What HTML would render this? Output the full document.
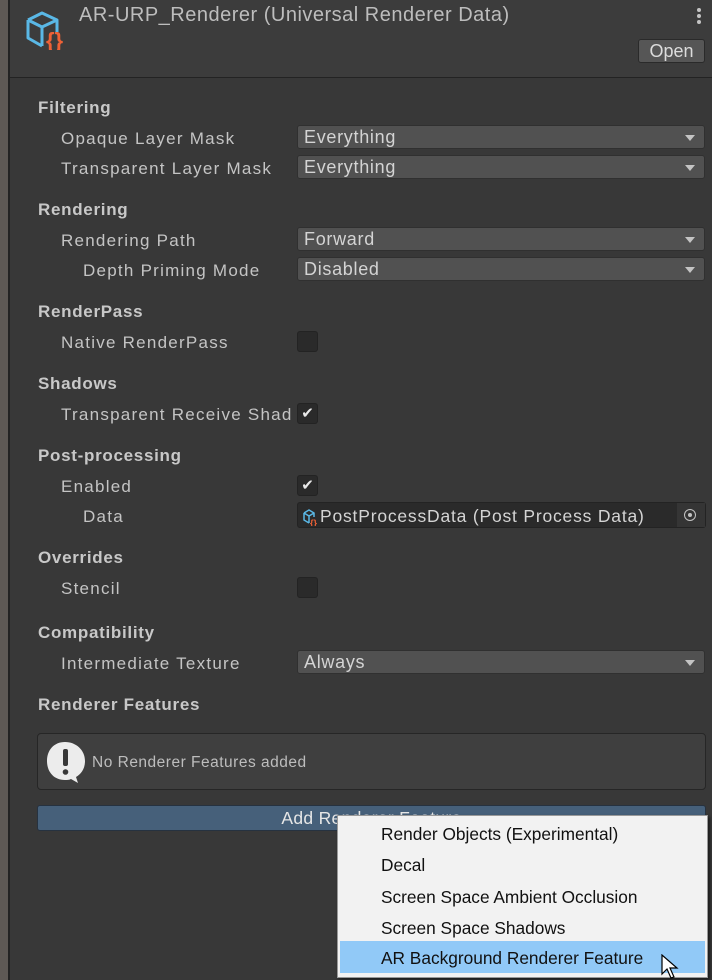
<!DOCTYPE html>
<html><head><style>
body{margin:0;width:712px;height:980px;background:#383838;position:relative;overflow:hidden;font-family:"Liberation Sans",sans-serif;color:#c4c4c4}
.a{position:absolute;white-space:nowrap}
.lb{font-size:17px;letter-spacing:1.25px}
.h{font-size:17px;font-weight:bold;letter-spacing:0.7px;color:#c8c8c8}
.dd{position:absolute;left:297px;width:408px;height:24px;background:#515151;border:1px solid #303030;border-radius:3px;box-sizing:border-box;font-size:18px;letter-spacing:0.7px;color:#d4d4d4;padding-left:6px;line-height:23px}
.dd:after{content:"";position:absolute;right:9px;top:9px;border-left:5px solid transparent;border-right:5px solid transparent;border-top:6px solid #c4c4c4}
.cb{position:absolute;left:297px;width:21px;height:21px;background:#2a2a2a;border:1px solid #232323;border-radius:3px;box-sizing:border-box;color:#e8e8e8;font-size:15px;text-align:center;line-height:20px}
.mi{position:absolute;left:381px;font-size:17.3px;color:#111;font-family:"Liberation Sans",sans-serif}
</style></head><body>
<div class="a" style="left:0;top:0;width:8px;height:980px;background:#5e5955"></div>
<div class="a" style="left:8px;top:0;width:2px;height:980px;background:#232323"></div>
<div class="a" style="left:10px;top:0;width:702px;height:77px;background:#3c3c3c;border-bottom:1px solid #232323"></div>
<svg class="a" style="left:24px;top:8px" width="48" height="42" viewBox="0 0 48 42">
<path d="M4 12 L18 5 L33 12 L33 24 M4 12 L4 30 L18 38 M4 12 L18 19 L33 12 M18 19 L18 38" fill="none" stroke="#5ab8e6" stroke-width="3" stroke-linejoin="round"/>
<text x="22" y="40" fill="#ef6136" font-size="22" font-weight="bold" font-family="Liberation Sans">{}</text>
</svg>
<div class="a" style="left:79px;top:4px;font-size:20px;letter-spacing:0.5px;color:#bdbdbd">AR-URP_Renderer (Universal Renderer Data)</div>
<div class="a" style="left:697px;top:8px;width:4px;height:4px;background:#c4c4c4;border-radius:2px;box-shadow:0 6px 0 #c4c4c4,0 12px 0 #c4c4c4"></div>
<div class="a" style="left:638px;top:39px;width:67px;height:24px;background:#565656;border:1px solid #2a2a2a;border-radius:3px;box-sizing:border-box;font-size:18px;text-align:center;line-height:22px;color:#dcdcdc">Open</div>

<div class="a h" style="left:38px;top:98px">Filtering</div>
<div class="a lb" style="left:61px;top:129px">Opaque Layer Mask</div>
<div class="dd" style="top:125px">Everything</div>
<div class="a lb" style="left:61px;top:159px">Transparent Layer Mask</div>
<div class="dd" style="top:155px">Everything</div>

<div class="a h" style="left:38px;top:200px">Rendering</div>
<div class="a lb" style="left:61px;top:231px">Rendering Path</div>
<div class="dd" style="top:227px">Forward</div>
<div class="a lb" style="left:83px;top:261px">Depth Priming Mode</div>
<div class="dd" style="top:257px">Disabled</div>

<div class="a h" style="left:38px;top:302px">RenderPass</div>
<div class="a lb" style="left:61px;top:333px">Native RenderPass</div>
<div class="cb" style="top:331px"></div>

<div class="a h" style="left:38px;top:374px">Shadows</div>
<div class="a lb" style="left:61px;top:405px">Transparent Receive Shad</div>
<div class="cb" style="top:403px">✔</div>

<div class="a h" style="left:38px;top:446px">Post-processing</div>
<div class="a lb" style="left:61px;top:477px">Enabled</div>
<div class="cb" style="top:475px">✔</div>
<div class="a lb" style="left:83px;top:507px">Data</div>
<div class="a" style="left:297px;top:502px;width:409px;height:26px;background:#2a2a2a;border:1px solid #232323;border-radius:3px;box-sizing:border-box"></div>
<div class="a" style="left:677px;top:503px;width:28px;height:24px;background:#353535"></div>
<div class="a" style="left:684px;top:509px;width:10px;height:10px;border:1.5px solid #c4c4c4;border-radius:50%"></div>
<div class="a" style="left:688px;top:513px;width:4px;height:4px;background:#c4c4c4;border-radius:50%"></div>
<svg class="a" style="left:302px;top:508px" width="16" height="18" viewBox="0 0 16 18"><path d="M2 5 L7 2 L12 5 L12 9 M2 5 L2 12 L7 15 M2 5 L7 8 L12 5 M7 8 L7 15" fill="none" stroke="#5ab8e6" stroke-width="1.5"/><text x="8" y="18" fill="#ef6136" font-size="9" font-weight="bold">{}</text></svg>
<div class="a" style="left:320px;top:506px;font-size:17.5px;letter-spacing:0.8px;color:#d4d4d4">PostProcessData (Post Process Data)</div>

<div class="a h" style="left:38px;top:548px">Overrides</div>
<div class="a lb" style="left:61px;top:579px">Stencil</div>
<div class="cb" style="top:577px"></div>

<div class="a h" style="left:38px;top:623px">Compatibility</div>
<div class="a lb" style="left:61px;top:654px">Intermediate Texture</div>
<div class="dd" style="top:650px">Always</div>

<div class="a h" style="left:38px;top:695px">Renderer Features</div>
<div class="a" style="left:37px;top:733px;width:669px;height:57px;background:#3f3f3f;border:1px solid #262626;border-radius:4px;box-sizing:border-box"></div>
<svg class="a" style="left:45px;top:740px" width="42" height="44" viewBox="0 0 42 44"><path d="M20 2 C31 2 40 10 40 21 C40 29 36 34 31 37 L33 43 L26 39 C24 40 22 40 20 40 C9 40 2 32 2 21 C2 10 9 2 20 2Z" fill="#ececec"/><rect x="18" y="9" width="5" height="17" rx="2" fill="#383838"/><circle cx="20.5" cy="32" r="2.8" fill="#383838"/></svg>
<div class="a" style="left:92px;top:754px;font-size:15.5px;letter-spacing:0.5px;color:#bdbdbd">No Renderer Features added</div>

<div class="a" style="left:37px;top:805px;width:669px;height:26px;background:#46607a;border:1px solid #263240;border-radius:3px;box-sizing:border-box;text-align:center;font-size:17.5px;line-height:25px;color:#e6e6e6;letter-spacing:0.3px">Add Renderer Feature</div>

<div class="a" style="left:337px;top:815px;width:371px;height:163px;background:#f2f2f2;border:1px solid #999;box-shadow:2px 2px 3px rgba(0,0,0,.5);box-sizing:border-box"></div>
<div class="a" style="left:340px;top:941px;width:365px;height:32px;background:#91c9f7"></div>
<div class="mi" style="top:824px">Render Objects (Experimental)</div>
<div class="mi" style="top:855px">Decal</div>
<div class="mi" style="top:887px">Screen Space Ambient Occlusion</div>
<div class="mi" style="top:918px">Screen Space Shadows</div>
<div class="mi" style="top:948px">AR Background Renderer Feature</div>
<svg class="a" style="left:660px;top:954px" width="22" height="26" viewBox="0 0 22 26"><path d="M2 1 L2 20 L7 15 L11 24 L14 23 L10 14 L17 14 Z" fill="#fff" stroke="#000" stroke-width="1.2"/></svg>
</body></html>
